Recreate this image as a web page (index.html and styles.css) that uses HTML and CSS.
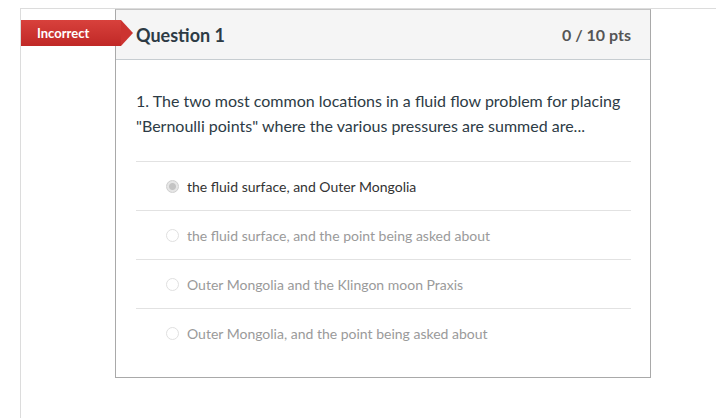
FILE: index.html
```html
<!DOCTYPE html>
<html lang="en">

<head>
    <meta charset="UTF-8">
    <meta name="viewport" content="width=device-width, initial-scale=1.0">
    <title>Quiz Results</title>
    <link rel="stylesheet" href="styles.css">
</head>

<body>
    <div class="quiz-page">
        <div class="answer-badge">Incorrect</div>

        <div class="question">
            <div class="question-header">
                <span class="question-name">Question 1</span>
                <span class="question-points">0 / 10 pts</span>
            </div>

            <div class="question-body">
                <p class="question-text">1. The two most common locations in a fluid flow problem for placing "Bernoulli points" where the various pressures are summed are...</p>

                <div class="answers">
                    <div class="answer selected">
                        <span class="radio"></span>
                        <span>the fluid surface, and Outer Mongolia</span>
                    </div>
                    <div class="answer">
                        <span class="radio"></span>
                        <span>the fluid surface, and the point being asked about</span>
                    </div>
                    <div class="answer">
                        <span class="radio"></span>
                        <span>Outer Mongolia and the Klingon moon Praxis</span>
                    </div>
                    <div class="answer">
                        <span class="radio"></span>
                        <span>Outer Mongolia, and the point being asked about</span>
                    </div>
                </div>
            </div>
        </div>
    </div>
</body>

</html>
```

FILE: styles.css
```css
body {
    margin: 0;
    font-family: Lato, 'Open Sans', sans-serif;
    background-color: #fff;
    color: #2d3b45;
}

.quiz-page {
    position: relative;
    margin: 8px 0 0 20px;
    min-height: 420px;
    border-top: 1px solid #dcdcdc;
    border-left: 1px solid #dcdcdc;
}

/* red "Incorrect" flag sitting over the question's left edge */
.answer-badge {
    position: absolute;
    top: 11px;
    left: 0;
    width: 100px;
    height: 26px;
    line-height: 26px;
    padding-left: 16px;
    box-sizing: border-box;
    background: linear-gradient(#d8413c, #c02826);
    color: #fff;
    font-size: 13px;
    font-weight: bold;
    z-index: 2;
}

.answer-badge::after {
    content: "";
    position: absolute;
    top: 0;
    right: -12px;
    border-top: 13px solid transparent;
    border-bottom: 13px solid transparent;
    border-left: 12px solid #cc3330;
}

.question {
    margin-left: 94px;
    width: 536px;
    box-sizing: border-box;
    border: 1px solid #a9a9a9;
    border-top-color: #c4c4c4;
}

.question-header {
    display: flex;
    justify-content: space-between;
    align-items: center;
    height: 49px;
    padding: 0 19px 0 20px;
    background-color: #f5f5f5;
    border-bottom: 1px solid #c7cdd1;
}

.question-name {
    font-size: 18px;
    font-weight: bold;
    color: #2d3b45;
}

.question-points {
    font-size: 16px;
    font-weight: bold;
    color: #555;
}

.question-body {
    padding: 28px 19px 20px 20px;
}

.question-text {
    margin: 0 0 23px;
    font-size: 16px;
    line-height: 25px;
}

.answer {
    display: flex;
    align-items: center;
    height: 48px;
    padding-left: 30px;
    border-top: 1px solid #e2e2e2;
    font-size: 14px;
    color: #9a9a9a;
}

.answer.selected {
    color: #333;
}

.radio {
    width: 11px;
    height: 11px;
    margin-right: 8px;
    border: 1px solid #e0e0e0;
    border-radius: 50%;
    background-color: #fff;
}

.answer.selected .radio {
    border-color: #cfcfcf;
    background: radial-gradient(circle, #c4c4c4 0 3px, #e6e6e6 4px);
}
```
